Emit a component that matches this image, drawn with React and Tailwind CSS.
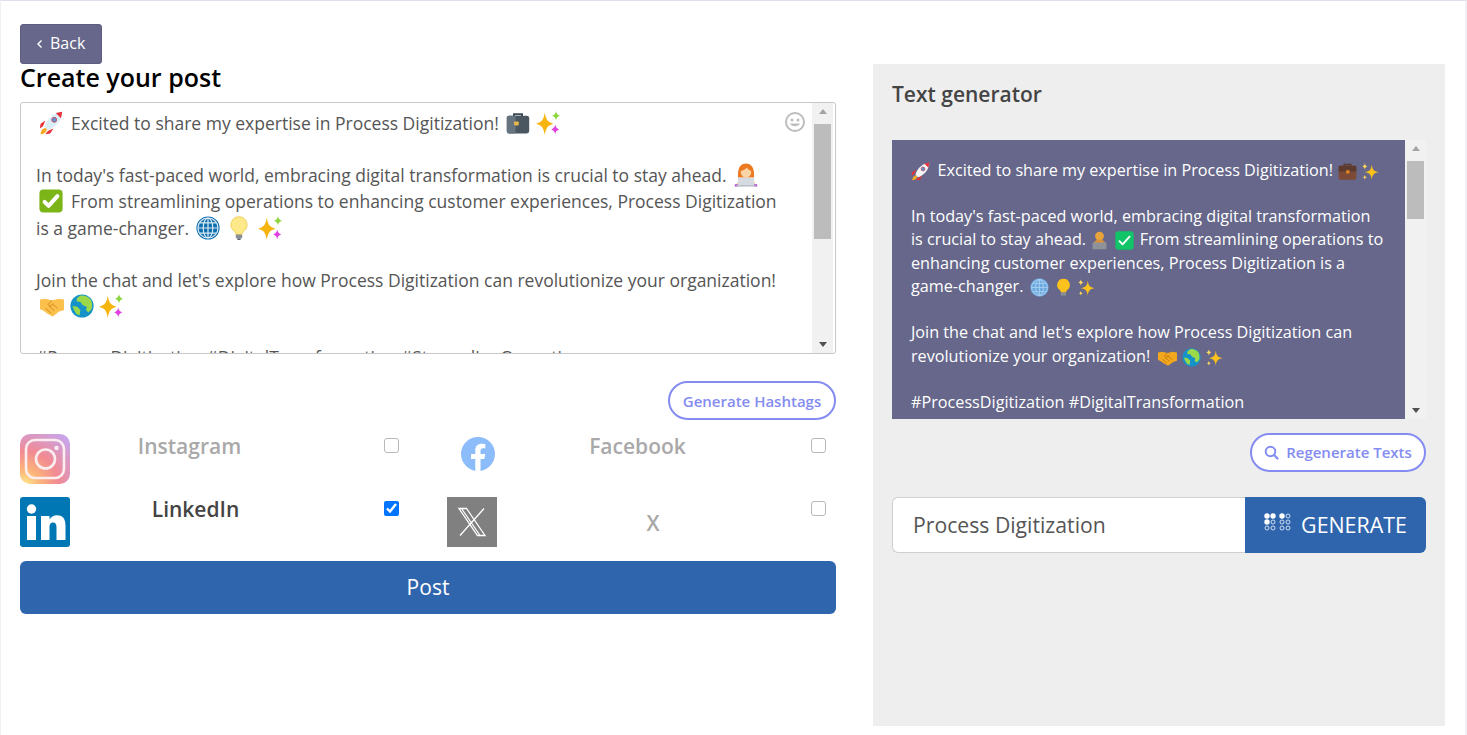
import React from "react";

const Svg = ({ s = 24, children }) => (
  <svg viewBox="1 1 30 30" width={s} height={s} className="inline-block align-[-5px] overflow-visible">{children}</svg>
);

const Rocket = ({ s, soft }) => (
  <Svg s={s}>
    <path d="M6 20l-4 3 1-6 6-4z" fill="#e8303a" />
    <path d="M12 26l-3 4 6-1 4-6z" fill="#e8303a" />
    <path d="M9 22c-4 1-6 4-6 8 4 0 7-2 8-6z" fill="#f7a823" />
    <path d="M8 21C10 12 18 4 30 2c-1 12-9 20-18 23z" fill={soft ? "#f4f4f4" : "#d9edf7"} />
    <path d="M22 3.500L30 2l-1.500 8z" fill="#e8303a" />
    <circle cx="20" cy="12" r="3" fill="#5b9bd5" stroke="#c0405a" strokeWidth="1.200" />
  </Svg>
);

const Brief = ({ s }) => (
  <Svg s={s}>
    <path d="M11 8V5h10v3" fill="none" stroke="#3e4a55" strokeWidth="2.500" />
    <rect x="2" y="7" width="28" height="22" rx="3" fill="#4a5761" />
    <rect x="2" y="7" width="11" height="22" rx="2" fill="#66747f" />
    <rect x="11" y="14" width="6" height="5" rx="1" fill="#e4b64d" />
  </Svg>
);

const BriefBrown = ({ s }) => (
  <Svg s={s}>
    <path d="M11 8V5h10v3" fill="none" stroke="#5a3a2a" strokeWidth="2.500" />
    <rect x="2" y="7" width="28" height="22" rx="3" fill="#7c4a36" />
    <rect x="2" y="7" width="28" height="9" rx="2" fill="#5c3a2e" />
    <rect x="14" y="14" width="5" height="5" fill="#e8871e" />
  </Svg>
);

const Spark = ({ s }) => (
  <Svg s={s}>
    <path d="M12 3c1.500 9 3.500 12 11 14-7.500 2-9.500 5-11 14-1.500-9-3.500-12-11-14 7.500-2 9.500-5 11-14z" fill="#f6b40e" />
    <path d="M26 1c.6 3.500 1.700 4.800 5 6-3.300 1.200-4.400 2.500-5 6-.6-3.500-1.700-4.800-5-6 3.300-1.200 4.400-2.500 5-6z" fill="#8ed63f" />
    <path d="M25 18c.6 3.500 1.700 4.800 5 6-3.300 1.200-4.400 2.500-5 6-.6-3.500-1.700-4.800-5-6 3.300-1.200 4.400-2.500 5-6z" fill="#e040e0" />
  </Svg>
);

const Sparkle2 = ({ s }) => (
  <Svg s={s}>
    <path d="M18 5c1 8 3 11 11 12-8 1-10 4-11 12-1-8-3-11-11-12 8-1 10-4 11-12z" fill="#fcc21b" />
    <path d="M7 3c.5 3 1.500 4 4 5-2.500 1-3.500 2-4 5-.5-3-1.500-4-4-5 2.500-1 3.500-2 4-5z" fill="#fdd75e" />
    <path d="M7 21c.4 2.500 1.200 3.300 3.500 4-2.300.7-3.100 1.500-3.500 4-.4-2.500-1.200-3.300-3.500-4 2.300-.7 3.100-1.500 3.500-4z" fill="#fdd75e" />
  </Svg>
);

const Coder = ({ s }) => (
  <Svg s={s}>
    <path d="M6 19C5 6 10 1.500 16 1.500S27 6 26 19z" fill="#ec7a22" />
    <circle cx="16" cy="12.500" r="6.500" fill="#fbd5a5" />
    <path d="M9.500 11c3-.5 6-2 7.500-4 1.500 2 3 3.500 5.500 4-.5-5-3-7-6.500-7s-6 2-6.500 7z" fill="#ec7a22" />
    <path d="M5 29c0-6 4-9 11-9s11 3 11 9z" fill="#f0a040" />
    <rect x="6" y="19.500" width="20" height="10" rx="1" fill="#d5dbe1" />
    <rect x="2" y="27.500" width="4" height="3" fill="#b355d8" />
    <rect x="26" y="27.500" width="4" height="3" fill="#b355d8" />
    <rect x="4" y="28.500" width="24" height="2" fill="#b8c0c8" />
  </Svg>
);

const Coder2 = ({ s }) => (
  <Svg s={s}>
    <circle cx="16" cy="9" r="7" fill="#e8a33a" />
    <path d="M6 24c0-6 4-9 10-9s10 3 10 9z" fill="#d9913a" />
    <rect x="5" y="19" width="22" height="11" rx="1" fill="#8f9298" />
  </Svg>
);

const Check = ({ s, flat }) => (
  <Svg s={s}>
    <rect x="1.500" y="1.500" width="29" height="29" rx="5" fill={flat ? "#10c467" : "#7cb518"} />
    <path d="M8 17l5 5 11-12" fill="none" stroke="#fff" strokeWidth={flat ? 3 : 5} strokeLinecap="round" strokeLinejoin="round" />
  </Svg>
);

const Globe = ({ s, light }) => {
  const c = light ? "#6aa9e0" : "#0f6fae";
  const b = light ? "#a8cdf0" : "#d8eaf5";
  return (
    <Svg s={s}>
      <circle cx="16" cy="16" r="14.500" fill={c} />
      <g fill="none" stroke={b} strokeWidth="1.500">
        <circle cx="16" cy="16" r="12.500" />
        <ellipse cx="16" cy="16" rx="6" ry="12.500" />
        <path d="M16 3.500v25M3.500 16h25M5.500 9.500h21M5.500 22.500h21" />
      </g>
    </Svg>
  );
};

const Bulb = ({ s, light }) => (
  <Svg s={s}>
    <path d="M16 2a10 10 0 0 0-6 18c1.500 1.300 2 3 2 4h8c0-1 .5-2.700 2-4A10 10 0 0 0 16 2z" fill={light ? "#fcc21b" : "#fde98a"} stroke={light ? "none" : "#e8c84a"} />
    <rect x="12" y="24" width="8" height="5" rx="1" fill="#8a8f96" />
    <rect x="14" y="29" width="4" height="2" fill="#62666c" />
  </Svg>
);

const Shake = ({ s, dark }) => (
  <Svg s={s}>
    <path d="M1 8l7-1 8 2 8-2 7 1v13l-6 2-8 6-6-3-7-5-3-1z" fill={dark ? "#f2a71f" : "#fcc04d"} />
    <path d="M8 19l7 6M12 16l7 6M16 13l7 6M16 9l-5 5 3 2 4-3" fill="none" stroke={dark ? "#c27a12" : "#e09a28"} strokeWidth="1.400" />
  </Svg>
);

const Earth = ({ s }) => (
  <Svg s={s}>
    <circle cx="16" cy="16" r="14.500" fill="#1593c8" />
    <path d="M14 3c4-1 10 1 13 5 2 4 2 9 1 12l-4 4-3-3 1-4-5-2-3-4-5-1 1-4zM4 16l6 1 4 4-1 7-4-2-3-5z" fill="#9bd84a" />
  </Svg>
);

const Up = ({ cls = "" }) => <div className={"w-0 h-0 border-x-[4px] border-x-transparent border-b-[5px] " + cls} />;
const Down = ({ cls = "" }) => <div className={"w-0 h-0 border-x-[4px] border-x-transparent border-t-[5px] " + cls} />;

const Scrollbar = ({ top, height, width, className = "" }) => (
  <div className={"relative shrink-0 bg-[#f1f1f1] " + width + " " + className}>
    <div className="absolute top-[6px] left-0 right-0 flex justify-center"><Up cls="border-b-[#a3a3a3]" /></div>
    <div className={"absolute left-[2px] right-[2px] bg-[#bcbcbc] " + top + " " + height} />
    <div className="absolute bottom-[6px] left-0 right-0 flex justify-center"><Down cls="border-t-[#505050]" /></div>
  </div>
);

const InstagramIcon = () => (
  <svg width="50" height="50" viewBox="0 0 50 50" className="block">
    <defs>
      <radialGradient id="ig" cx="10%" cy="100%" r="120%">
        <stop offset="0" stopColor="#fde68a" />
        <stop offset="0.25" stopColor="#fbb27a" />
        <stop offset="0.55" stopColor="#f28a93" />
        <stop offset="1" stopColor="#c9a4e8" />
      </radialGradient>
    </defs>
    <rect width="50" height="50" rx="10" fill="url(#ig)" />
    <rect x="6" y="6" width="38" height="38" rx="9" fill="none" stroke="#fbeef0" strokeWidth="2.600" />
    <circle cx="25.500" cy="25" r="9.500" fill="none" stroke="#fbeef0" strokeWidth="2.600" />
    <circle cx="36.500" cy="14" r="2.200" fill="#fbeef0" />
  </svg>
);

const FacebookIcon = () => (
  <svg width="34" height="34" viewBox="0 0 34 34" className="block">
    <defs>
      <clipPath id="fbc"><circle cx="17" cy="17" r="17" /></clipPath>
    </defs>
    <circle cx="17" cy="17" r="17" fill="#8dbcfa" />
    <path clipPath="url(#fbc)" d="M14.300 34V22h-4.300v-5h4.300v-3.700c0-4.300 2.500-6.600 6.400-6.600 1.900 0 3.600.3 3.600.3v4.200h-2.100c-2.100 0-2.700 1.300-2.700 2.600V17h4.700l-.8 5h-3.900v12z" fill="#fff" />
  </svg>
);

const LinkedInIcon = () => (
  <svg width="50" height="50" viewBox="0 0 50 50" className="block">
    <rect width="50" height="50" rx="3" fill="#0077b5" />
    <circle cx="11.500" cy="12" r="4.700" fill="#fff" />
    <rect x="7" y="19" width="9" height="24" fill="#fff" />
    <path d="M21 19h8.500v3.500c1.500-2.500 4-4.200 7.500-4.200 6.500 0 8.500 4.200 8.500 10.500V43h-9V30.500c0-3-.8-5-3.400-5-2.800 0-3.600 2.200-3.600 5V43H21z" fill="#fff" />
  </svg>
);

const XIcon = () => (
  <svg width="50" height="50" viewBox="0 0 50 50" className="block">
    <rect width="50" height="50" fill="#808080" />
    <path d="M12 11.500h7.500L38 38.500h-7.500zM37 11.500L13 38.500M14.500 11.500l18.500 27" fill="none" stroke="#fff" strokeWidth="1.300" />
  </svg>
);

const GridIcon = () => (
  <svg width="27" height="18" viewBox="0 0 27 18" className="block mb-[6px]">
    {[3, 9, 15].map((y, r) =>
      [3, 9, 18, 24].map((x, c) => {
        const solid = (r === 0 && c < 3) || (r === 1 && c === 0);
        return (
          <circle key={r + "-" + c} cx={x} cy={y} r={solid ? 2.700 : 2} fill={solid ? "#fff" : "none"} stroke={solid ? "none" : "#dfe8f5"} strokeWidth="0.900" />
        );
      })
    )}
  </svg>
);

const Row = ({ children }) => <div className="flex w-full">{children}</div>;

const Social = ({ icon, label, checked, iconCls, labelCls, textCls, cellCls }) => (
  <div className={"flex items-start " + cellCls}>
    <div className={"shrink-0 " + iconCls}>{icon}</div>
    <div className={"flex-1 text-center text-[21px] font-semibold leading-[26px] " + textCls + " " + labelCls}>{label}</div>
    {checked ? (
      <input type="checkbox" readOnly checked className="shrink-0 w-[15px] h-[15px] mt-[4px] accent-[#0075ff]" />
    ) : (
      <input type="checkbox" readOnly checked={false} className="shrink-0 w-[15px] h-[15px] mt-[4px] appearance-none bg-white border border-[#b8b8b8] rounded-[3px]" />
    )}
  </div>
);

const L = ({ children, cls = "" }) => <div className={"whitespace-nowrap h-[26.250px] " + cls}>{children}</div>;
const R = ({ children, cls = "" }) => <div className={"whitespace-nowrap h-[23.250px] " + cls}>{children}</div>;

export default function App() {
  return (
    <div className="w-[1467px] h-[735px] overflow-hidden bg-white border-t border-t-[#dfe0ea] border-l border-l-[#f1f1f5] border-r-2 border-r-[#f1f1f5] font-['Open_Sans',sans-serif] text-[#495057]">
      <div className="flex pl-[19px] pt-[23px]">
        <div className="w-[816px] shrink-0">
          <button className="flex items-center gap-[6px] w-[82px] h-[40px] pl-[15px] pb-[3px] rounded-[3px] bg-[#66678a] text-white text-[16px] border border-[#5c5d80]">
            <svg width="8" height="10" viewBox="0 0 8 10" className="mt-[2px]"><path d="M5.500 1.500L2 5l3.500 3.500" fill="none" stroke="#fff" strokeWidth="1.400" /></svg>
            Back
          </button>
          <h1 className="text-[25px] leading-[28px] font-semibold text-black -mt-[1px]">Create your post</h1>

          <div className="flex h-[252px] mt-[11px] border border-[#c8c8c8] rounded-[3px] overflow-hidden relative bg-white">
            <div className="flex-1 pl-[15px] pt-[6.700px] pr-[30px] text-[17.500px] leading-[26.250px] text-[#555] overflow-hidden">
              <L><span className="ml-[3px] -mr-[1px]"><Rocket s={24} /></span>&nbsp; Excited to share my expertise in Process Digitization! <span className="ml-[3px]"><Brief s={24} /></span> <span className="ml-[1px]"><Spark s={24} /></span></L>
              <L />
              <L>In today's fast-paced world, embracing digital transformation is crucial to stay ahead. <span className="ml-[3px]"><Coder s={24} /></span></L>
              <L><span className="ml-[3px] -mr-[1px]"><Check s={24} /></span>&nbsp; From streamlining operations to enhancing customer experiences, Process Digitization</L>
              <L>is a game-changer. <span className="ml-[2px]"><Globe s={24} /></span> <span className="ml-[3px]"><Bulb s={24} /></span> <span className="ml-[2px]"><Spark s={24} /></span></L>
              <L />
              <L>Join the chat and let's explore how Process Digitization can revolutionize your organization!</L>
              <L><span className="ml-[4px]"><Shake s={24} /></span> <span className="ml-[1px]"><Earth s={24} /></span> <span className="ml-[1px]"><Spark s={24} /></span></L>
              <L />
              <L cls="-mt-[2px]">#ProcessDigitization #DigitalTransformation #StreamlineOperations</L>
            </div>
            <svg width="20" height="20" viewBox="0 0 20 20" className="absolute top-[9px] right-[30px]">
              <circle cx="10" cy="10" r="9" fill="none" stroke="#bdbdbd" strokeWidth="2" />
              <circle cx="7" cy="8" r="1.500" fill="#bdbdbd" />
              <circle cx="13" cy="8" r="1.500" fill="#bdbdbd" />
              <path d="M5 11.500c1 3.500 9 3.500 10 0z" fill="#bdbdbd" />
            </svg>
            <Scrollbar width="w-[21px] mr-[2px]" top="top-[21px]" height="h-[115px]" />
          </div>

          <div className="flex justify-end mt-[27px]">
            <button className="w-[168px] h-[39px] pt-[1px] rounded-full border-2 border-[#848cf2] bg-white text-[#848cf2] text-[15px] font-semibold">Generate Hashtags</button>
          </div>

          <div className="mt-[14px] flex flex-col gap-[13px]">
            <Row>
              <Social cellCls="w-[379px] h-[50px]" icon={<InstagramIcon />} label="Instagram" checked={false} textCls="text-[#a9a9a9]" labelCls="pr-[75px] -mt-[1px]" iconCls="w-[50px]" />
              <Social cellCls="flex-1 h-[50px] pl-[48px]" icon={<FacebookIcon />} label="Facebook" checked={false} textCls="text-[#a9a9a9]" labelCls="pr-[33px] -mt-[1px]" iconCls="w-[50px] pl-[14px] mt-[3px]" />
              <div className="w-[10px] shrink-0" />
            </Row>
            <Row>
              <Social cellCls="w-[379px] h-[50px]" icon={<LinkedInIcon />} label="LinkedIn" checked textCls="text-[#444]" labelCls="pr-[63px] -mt-[1px]" iconCls="w-[50px]" />
              <Social cellCls="flex-1 h-[50px] pl-[48px]" icon={<XIcon />} label="X" checked={false} textCls="text-[#a9a9a9]" labelCls="mt-[13px] pr-[2px]" iconCls="w-[50px]" />
              <div className="w-[10px] shrink-0" />
            </Row>
          </div>

          <button className="w-full h-[53px] mt-[14px] rounded-[6px] bg-[#2f65ad] text-white text-[21px]">Post</button>
        </div>

        <div className="ml-[37px] mt-[40px] w-[572px] h-[662px] shrink-0 bg-[#eeeeee] px-[19px] pt-[16px]">
          <h2 className="text-[21px] leading-[28px] font-semibold text-[#444]">Text generator</h2>
          <div className="flex h-[279px] mt-[32px]">
            <div className="w-[513px] bg-[#66678a] text-white pl-[19px] pr-[8px] pt-[18.600px] text-[16.200px] leading-[23.250px] overflow-hidden">
              <R><span className="-mr-[1px]"><Rocket s={19} soft /></span>&nbsp; Excited to share my expertise in Process Digitization! <span className="ml-[1px]"><BriefBrown s={19} /></span> <Sparkle2 s={19} /></R>
              <R />
              <R>In today's fast-paced world, embracing digital transformation</R>
              <R>is crucial to stay ahead. <Coder2 s={19} /> <span className="ml-[1px]"><Check s={19} flat /></span> <span className="ml-[2px]">From streamlining operations to</span></R>
              <R>enhancing customer experiences, Process Digitization is a</R>
              <R>game-changer. <span className="ml-[2px]"><Globe s={19} light /></span> <span className="ml-[1px]"><Bulb s={19} light /></span> <Sparkle2 s={19} /></R>
              <R />
              <R>Join the chat and let's explore how Process Digitization can</R>
              <R>revolutionize your organization! <span className="ml-[4px]"><Shake s={19} dark /></span> <Earth s={19} /> <Sparkle2 s={19} /></R>
              <R />
              <R>#ProcessDigitization #DigitalTransformation</R>
              <R>#StreamlineOperations #Innovation #ProcessImprovement</R>
            </div>
            <Scrollbar width="w-[21px]" top="top-[21px]" height="h-[58px]" />
          </div>
          <div className="flex justify-end mt-[14px]">
            <button className="flex items-center justify-center gap-[7px] w-[176px] h-[39px] rounded-full border-2 border-[#848cf2] bg-white text-[#848cf2] text-[15px] font-semibold">
              <svg width="15" height="15" viewBox="0 0 15 15"><circle cx="6.500" cy="6.500" r="4.800" fill="none" stroke="#848cf2" strokeWidth="2" /><path d="M10 10l3.500 3.500" stroke="#848cf2" strokeWidth="2.200" strokeLinecap="round" /></svg>
              Regenerate Texts
            </button>
          </div>
          <div className="flex h-[56px] mt-[25px]">
            <div className="w-[353px] h-full bg-white border border-[#cfcfcf] border-r-0 rounded-l-[6px] flex items-center pl-[20px] text-[21.200px] text-[#555]">Process Digitization</div>
            <button className="w-[181px] h-full bg-[#2f65ad] rounded-r-[6px] flex items-center justify-center gap-[10px] text-white text-[21.400px]">
              <GridIcon />
              GENERATE
            </button>
          </div>
        </div>
      </div>
    </div>
  );
}
